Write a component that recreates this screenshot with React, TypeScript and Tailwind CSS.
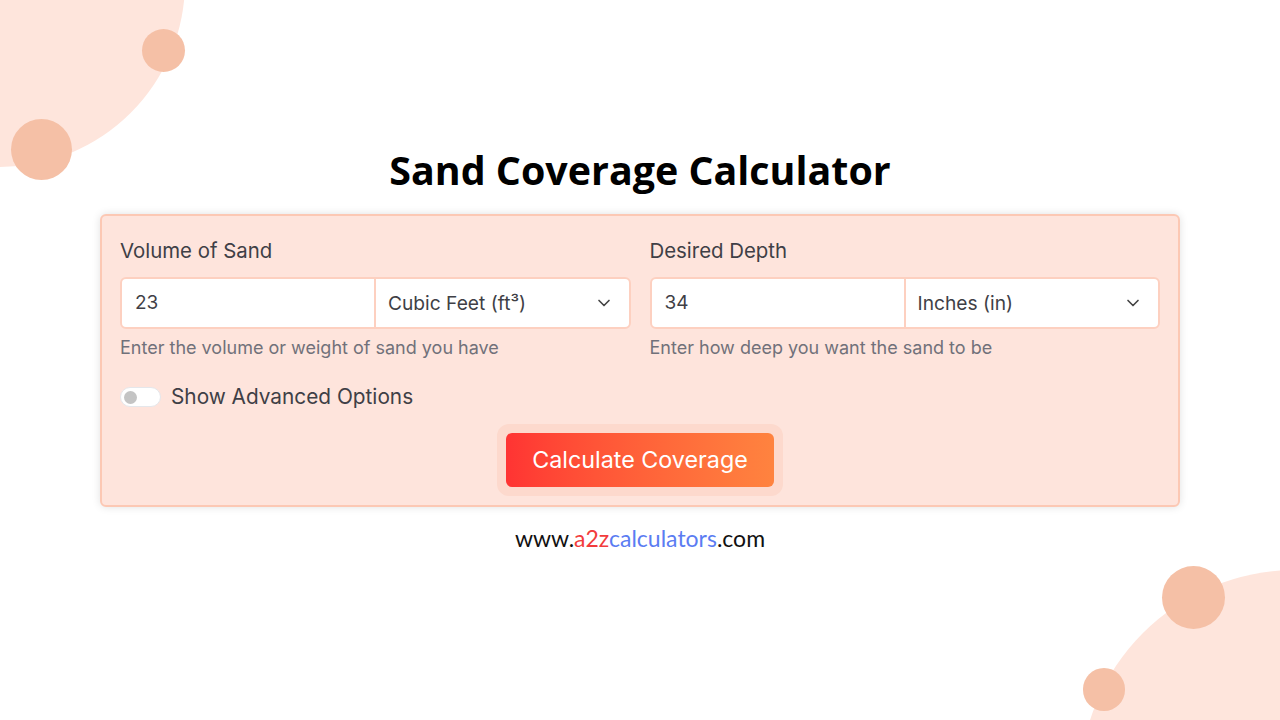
import { ChevronDown } from "lucide-react";

function Field({
  label,
  value,
  unit,
  hint,
}: {
  label: string;
  value: string;
  unit: string;
  hint: string;
}) {
  return (
    <div className="flex flex-col">
      <label className="text-[20.4px] leading-[28px] text-[#3f3f46] mt-[21px]">{label}</label>
      <div className="mt-[12px] flex h-[52px] rounded-[6px] border-2 border-[#fdd0c0] bg-white overflow-hidden">
        <div className="w-[254px] border-r-2 border-[#fdd0c0] flex items-center px-[13px] text-[19px] text-[#3f3f46]">
          {value}
        </div>
        <div className="flex-1 flex items-center justify-between pl-[12px] pr-[15px] text-[19.2px] text-[#3f3f46]">
          <span>{unit}</span>
          <ChevronDown size={20} strokeWidth={2} className="text-[#444]" />
        </div>
      </div>
      <p className="mt-[7px] text-[18px] leading-[24px] text-[#71717a]">{hint}</p>
    </div>
  );
}

export default function App() {
  return (
    <div
      className="relative w-[1280px] h-[720px] overflow-hidden bg-white"
      style={{ fontFamily: "Inter, 'Liberation Sans', sans-serif" }}
    >
      {/* corner decorations */}
      <div className="absolute left-[-185px] top-[-203px] w-[370px] h-[370px] rounded-full bg-[#fee5dc]" />
      <div className="absolute left-[142px] top-[29px] w-[43px] h-[43px] rounded-full bg-[#f5c0a6]" />
      <div className="absolute left-[11px] top-[119px] w-[61px] h-[61px] rounded-full bg-[#f5c0a6]" />
      <div className="absolute left-[1080px] top-[570px] w-[430px] h-[430px] rounded-full bg-[#fee5dc]" />
      <div className="absolute left-[1162px] top-[566px] w-[63px] h-[63px] rounded-full bg-[#f5c0a6]" />
      <div className="absolute left-[1083px] top-[668px] w-[42px] h-[43px] rounded-full bg-[#f5c0a6]" />

      <div className="relative flex flex-col items-center pt-[143px]">
        <h1
          className="text-[39.4px] leading-[54px] font-bold text-black"
          style={{ fontFamily: "'Open Sans', 'Noto Sans', sans-serif" }}
        >
          Sand Coverage Calculator
        </h1>

        <div className="mt-[17px] w-[1080px] h-[293px] rounded-[6px] border-2 border-[#fcc8b4] bg-[#fee4dc] shadow-[0_0_8px_rgba(0,0,0,0.12)] px-[18px]">
          <div className="grid grid-cols-2 gap-[19px]">
            <Field
              label="Volume of Sand"
              value="23"
              unit="Cubic Feet (ft³)"
              hint="Enter the volume or weight of sand you have"
            />
            <Field
              label="Desired Depth"
              value="34"
              unit="Inches (in)"
              hint="Enter how deep you want the sand to be"
            />
          </div>

          <div className="mt-[21px] flex items-center gap-[10px]">
            <div className="relative w-[41px] h-[20px] rounded-full bg-white border border-[#e5e7eb]">
              <div className="absolute left-[3px] top-[3px] w-[13px] h-[13px] rounded-full bg-[#c4c4c4]" />
            </div>
            <span className="text-[20.8px] text-[#3f3f46]">Show Advanced Options</span>
          </div>

          <div className="mt-[12px] flex justify-center">
            <div className="p-[9px] rounded-[12px] bg-[#fdd9cd]">
              <button className="w-[268px] h-[54px] rounded-[6px] bg-gradient-to-r from-[#ff3333] to-[#ff833f] text-white text-[23.3px]">
                Calculate Coverage
              </button>
            </div>
          </div>
        </div>

        <p
          className="mt-[14px] text-[23px] text-[#111]"
          style={{ fontFamily: "Lato, 'Open Sans', sans-serif" }}
        >
          www.<span className="text-[#f23c3c]">a2z</span>
          <span className="text-[#5b7cf2]">calculators</span>.com
        </p>
      </div>
    </div>
  );
}
